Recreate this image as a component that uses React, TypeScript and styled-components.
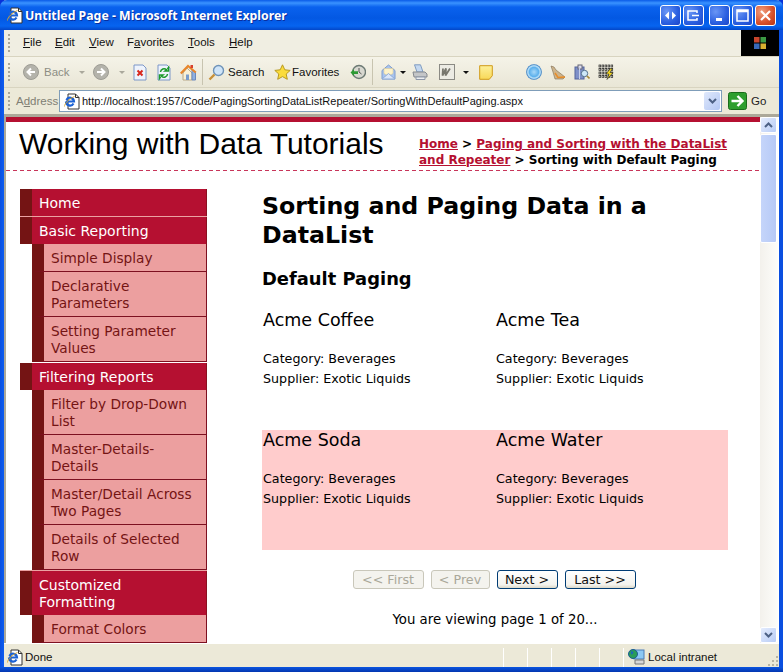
import React from "react";
import styled, { createGlobalStyle } from "styled-components";

const GlobalStyle = createGlobalStyle`
  html, body { margin: 0; padding: 0; background: #0831d9; overflow: hidden; }
  * { box-sizing: border-box; }
`;

const UI_FONT = `"Liberation Sans", Arial, sans-serif`;
const PAGE_FONT = `"DejaVu Sans", Verdana, sans-serif`;

const Window = styled.div`
  width: 783px;
  height: 672px;
  display: flex;
  flex-direction: column;
  overflow: hidden;
  border-radius: 7px 7px 0 0;
  background: linear-gradient(90deg, #0a4fe0 0, #0d5cf0 4px, #ece9d8 4px, #ece9d8 779px, #0a4fe0 779px);
  font-family: ${UI_FONT};
`;

const TitleBar = styled.div`
  height: 30px;
  flex: none;
  display: flex;
  align-items: center;
  padding: 0 7px 0 6px;
  background: linear-gradient(180deg, #0a5be8 0, #3a93ff 3px, #0a62ee 7px, #0358e3 18px, #0664f0 26px, #0346c8 30px);
`;

const TitleText = styled.span`
  margin-left: 2px;
  flex: 1;
  color: #fff;
  font-family: "Noto Sans", sans-serif;
  font-size: 12.3px;
  font-weight: 700;
  text-shadow: 1px 1px 0 #0a2f9e;
  white-space: nowrap;
`;

const CaptionButton = styled.div<{ $red?: boolean; $gap?: number }>`
  width: 21px;
  height: 21px;
  margin-left: ${(p) => p.$gap ?? 2}px;
  border: 1px solid #fff;
  border-radius: 3px;
  display: flex;
  align-items: center;
  justify-content: center;
  background: ${(p) =>
    p.$red
      ? "radial-gradient(circle at 30% 30%, #f0a080, #d8502a 60%, #b93412)"
      : "radial-gradient(circle at 30% 30%, #6a96f5, #2a5fe0 60%, #1c45c8)"};
`;

const Chrome = styled.div`
  flex: none;
  margin: 0 4px;
  background: #ece9d8;
`;

const MenuRow = styled.div`
  height: 27px;
  display: flex;
  align-items: center;
  padding-left: 4px;
  background: #f0eee2;
  border-bottom: 1px solid #d8d4c0;
`;

const Grip = styled.div<{ $gap?: number }>`
  width: 2px;
  height: 18px;
  flex: none;
  margin-right: ${(p) => p.$gap ?? 13}px;
  background: repeating-linear-gradient(180deg, #a8a698 0, #a8a698 2px, transparent 2px, transparent 4px);
`;

const MenuItem = styled.span<{ $w: number }>`
  width: ${(p) => p.$w}px;
  margin-bottom: 2px;
  font-size: 11.5px;
  color: #111;
  u { text-decoration: underline; }
`;

const Flag = styled.div`
  margin-left: auto;
  width: 38px;
  height: 26px;
  background: #000;
  display: flex;
  align-items: center;
  justify-content: center;
`;

const ToolRow = styled.div`
  height: 31px;
  display: flex;
  align-items: center;
  padding-left: 4px;
  border-bottom: 1px solid #d8d4c0;
  background: linear-gradient(180deg, #f5f3e8, #e9e6d6);
`;

const Slot = styled.div<{ $w: number }>`
  width: ${(p) => p.$w}px;
  flex: none;
  display: flex;
  align-items: center;
  font-size: 11.5px;
  color: #111;
`;

const Disabled = styled.span`
  color: #8d8d84;
  margin-left: 5px;
`;

const ToolLabel = styled.span<{ $gap: number }>`
  margin-left: ${(p) => p.$gap}px;
`;

const Caret = styled.div<{ $dim?: boolean; $gap?: number }>`
  width: 0;
  height: 0;
  margin-left: ${(p) => p.$gap ?? 0}px;
  border-left: 3px solid transparent;
  border-right: 3px solid transparent;
  border-top: 3px solid ${(p) => (p.$dim ? "#aaa89c" : "#111")};
`;

const Sep = styled.div`
  width: 1px;
  height: 26px;
  flex: none;
  background: #c8c4b0;
`;

const AddressRow = styled.div`
  height: 26px;
  display: flex;
  align-items: center;
  padding-left: 4px;
`;

const AddressLabel = styled.span`
  width: 43px;
  font-size: 11.5px;
  color: #7f7e74;
`;

const AddressBox = styled.div`
  width: 663px;
  height: 22px;
  display: flex;
  align-items: center;
  padding-left: 3px;
  background: #fff;
  border: 1px solid #7f9db9;
`;

const UrlText = styled.span`
  flex: 1;
  margin: 0 0 1px 2px;
  font-size: 11px;
  color: #111;
  white-space: nowrap;
`;

const DropButton = styled.div`
  width: 16px;
  height: 18px;
  margin-right: 1px;
  display: flex;
  align-items: center;
  justify-content: center;
  background: linear-gradient(135deg, #dfe8fb, #b4c8f4);
  border-radius: 2px;
`;

const GoWrap = styled.div`
  display: flex;
  align-items: center;
  margin-left: 6px;
  font-size: 11.5px;
  color: #222;
  span { margin-left: 4px; }
`;

const Viewport = styled.div`
  flex: none;
  height: 529px;
  margin: 0 4px;
  display: flex;
  border-top: 3px solid #aca899;
  border-left: 2px solid #aca899;
  background: #fff;
  overflow: hidden;
`;

const Page = styled.div`
  width: 754px;
  flex: none;
  overflow: hidden;
  font-family: ${PAGE_FONT};
`;

const TopStripe = styled.div`
  height: 5px;
  background: #b51031;
`;

const Header = styled.div`
  height: 49px;
  display: flex;
  background: repeating-linear-gradient(90deg, #c8355a 0, #c8355a 4px, transparent 4px, transparent 7px) left bottom / 100% 1px no-repeat;
`;

const SiteTitle = styled.div`
  width: 400px;
  padding: 4px 0 0 13px;
  font-family: "Liberation Sans", Arial, sans-serif;
  font-size: 30px;
  line-height: 36px;
  color: #000;
  white-space: nowrap;
`;

const Crumbs = styled.div`
  width: 326px;
  padding: 14px 0 0 13px;
  font-size: 12px;
  line-height: 16px;
  font-weight: 700;
  color: #000;
  white-space: nowrap;
  a { color: #b51031; text-decoration: underline; }
`;

const Body = styled.div`
  display: flex;
  padding-top: 18px;
`;

const Sidebar = styled.nav`
  width: 187px;
  margin-left: 14px;
  flex: none;
  font-size: 14px;
  line-height: 17px;
`;

const MainLink = styled.div<{ $gapTop?: number }>`
  margin-top: ${(p) => p.$gapTop ?? 0}px;
  background: #b51031;
  color: #fff;
  border-left: 12px solid #741414;
  border-right: 1px solid #8a1020;
  padding: 6px 4px 4px 7px;
`;

const SubLink = styled.div`
  margin-left: 12px;
  border-left: 12px solid #741414;
  border-right: 1px solid #7d1020;
  border-bottom: 1px solid #7d1020;
  background: #ec9f9f;
  color: #741414;
  font-size: 13.7px;
  padding: 6px 8px 4px 7px;
`;

const LightRule = styled.div`
  height: 1px;
  background: #eba2a2;
`;

const Main = styled.main`
  margin-left: 55px;
  padding-top: 3px;
  width: 466px;
  color: #000;
`;

const Heading = styled.h1`
  margin: 0 0 18px;
  font-size: 23.7px;
  line-height: 29px;
  font-weight: 700;
`;

const SubHeading = styled.h2`
  margin: 0 0 20px;
  font-size: 17.9px;
  line-height: 22px;
  font-weight: 700;
`;

const Row = styled.div<{ $pink?: boolean }>`
  height: 120px;
  display: grid;
  grid-template-columns: 233px 233px;
  background: ${(p) => (p.$pink ? "#ffcccc" : "transparent")};
`;

const Product = styled.div`
  padding-left: 1px;
`;

const ProductName = styled.div`
  height: 39px;
  font-size: 17.5px;
  line-height: 20px;
`;

const ProductLine = styled.div`
  font-size: 12.7px;
  line-height: 20px;
`;

const Pager = styled.div`
  display: flex;
  justify-content: center;
  gap: 7px;
  margin-top: 20px;
  padding-right: 2px;
`;

const PagerButton = styled.button<{ $w: number }>`
  width: ${(p) => p.$w}px;
  height: 19px;
  padding: 0;
  border-radius: 3px;
  font-family: ${PAGE_FONT};
  font-size: 12.7px;
  line-height: 15px;
  color: #111;
  border: 1px solid #003c74;
  background: linear-gradient(180deg, #fff, #f4f3ee 80%, #dcd8c8);
  &:disabled {
    color: #aaa89a;
    border-color: #c9c7ba;
    background: #f4f3ee;
  }
`;

const PageNote = styled.div`
  margin-top: 21px;
  text-align: center;
  font-size: 13.3px;
  line-height: 20px;
`;

const Scrollbar = styled.div`
  width: 18px;
  flex: none;
  display: flex;
  flex-direction: column;
  background: linear-gradient(90deg, #f3f1ec, #fdfdfa);
`;

const ScrollBtn = styled.div`
  width: 17px;
  height: 16px;
  flex: none;
  display: flex;
  align-items: center;
  justify-content: center;
  border: 1px solid #fff;
  border-radius: 2px;
  background: linear-gradient(135deg, #e4ecfd, #b8ccf6);
`;

const ScrollThumb = styled.div`
  width: 17px;
  height: 109px;
  margin-top: 1px;
  flex: none;
  border: 1px solid #fff;
  border-radius: 2px;
  background: linear-gradient(90deg, #c5d5fa, #b6c9f6);
`;

const ScrollTrack = styled.div`
  flex: 1;
`;

const StatusBar = styled.div`
  flex: none;
  height: 24px;
  margin: 0 4px;
  padding-top: 3px;
  display: flex;
  align-items: center;
  border-top: 1px solid #fff;
  background: #ece9d8;
  font-size: 11.5px;
  color: #111;
`;

const StatusMain = styled.div`
  width: 499px;
  flex: none;
  display: flex;
  align-items: center;
  padding-left: 2px;
  span { margin-left: 2px; }
`;

const StatusCell = styled.div`
  width: 24px;
  height: 19px;
  flex: none;
  border-left: 1px solid #fff;
`;

const ZoneCell = styled.div`
  flex: 1;
  height: 19px;
  display: flex;
  align-items: center;
  padding-left: 4px;
  border-left: 1px solid #fff;
  span { margin-left: 3px; }
  svg:last-child { margin-left: auto; align-self: flex-end; }
`;

const BottomEdge = styled.div`
  flex: 1;
  background: linear-gradient(180deg, #0a55e0, #0336b0);
`;

const IeDoc = () => (
  <svg width="17" height="17" viewBox="0 0 17 17">
    <path d="M5 1h7.500L16 4.500V16H5z" fill="#fff" stroke="#333" />
    <path d="M12.500 1v3.500H16" fill="none" stroke="#333" />
    <path d="M3 8.500h8a4 4 0 0 0-7.600-1.500M3 8.500a4 4 0 0 0 7.500 2" fill="none" stroke="#1c62d4" strokeWidth="2.200" />
    <path d="M1.500 13.500C1 11 7 5 11.500 3.500" fill="none" stroke="#e0a828" strokeWidth=".9" />
  </svg>
);

const NavCircle = ({ back }: { back?: boolean }) => (
  <svg width="16" height="16" viewBox="0 0 16 16">
    <circle cx="8" cy="8" r="7.500" fill="#b4b3ab" stroke="#9d9c94" />
    <path d={back ? "M12 8H5M8 4.500 4.500 8 8 11.500" : "M4 8h7M8 4.500 11.500 8 8 11.500"} stroke="#fff" strokeWidth="2" fill="none" />
  </svg>
);

const StopIcon = () => (
  <svg width="14" height="17" viewBox="0 0 14 17">
    <path d="M1 1h9l3 3v12H1z" fill="#eef3fc" stroke="#7d97c8" />
    <path d="M4.500 6.500l5 5M9.500 6.500l-5 5" stroke="#d8261c" strokeWidth="2" />
  </svg>
);

const RefreshIcon = () => (
  <svg width="14" height="17" viewBox="0 0 14 17">
    <path d="M1 1h9l3 3v12H1z" fill="#eef3fc" stroke="#7d97c8" />
    <path d="M3.500 8a3.500 3.500 0 0 1 6-2.200L8 7h3.500V3.500L10.400 5M10.500 10a3.500 3.500 0 0 1-6 2.200L6 11H2.500v3.500l1.100-1.500" fill="none" stroke="#1c9a2c" strokeWidth="1.500" />
  </svg>
);

const HomeIcon = () => (
  <svg width="17" height="17" viewBox="0 0 17 17">
    <path d="M3 9v7h9V9L7 4z" fill="#fbf0d4" stroke="#b8a888" />
    <path d="M12 16h3.500V8.500L12 5.500z" fill="#8fb0e0" stroke="#6a88bc" />
    <path d="M.8 9.500 8 2l7.800 6.500" fill="none" stroke="#e8862c" strokeWidth="2.200" />
    <rect x="10.500" y="1" width="2.500" height="3" fill="#d8402c" />
    <rect x="6" y="10.500" width="3" height="5.500" fill="#7a9ccc" />
  </svg>
);

const SearchIcon = () => (
  <svg width="17" height="17" viewBox="0 0 17 17">
    <circle cx="10.500" cy="6.500" r="5" fill="#cfe4f8" stroke="#6f93b8" strokeWidth="1.400" />
    <path d="M6.500 10.500 1.500 15.500" stroke="#c89038" strokeWidth="2.400" />
  </svg>
);

const StarIcon = () => (
  <svg width="17" height="16" viewBox="0 0 17 16">
    <path d="M8.500.8 10.800 5.800l5.400.6-4 3.600 1.100 5.300-4.800-2.700-4.800 2.700L4.800 10l-4-3.600 5.400-.6z" fill="#fbdc3c" stroke="#b89a20" />
  </svg>
);

const HistoryIcon = () => (
  <svg width="16" height="16" viewBox="0 0 16 16">
    <circle cx="9" cy="8" r="6.500" fill="#d8d8d0" stroke="#6d7a74" strokeWidth="1.400" />
    <path d="M9 4v4l2.500 2" stroke="#555" fill="none" />
    <path d="M.5 8.500 4 5v2.200h4V10H4v2z" fill="#2d9a34" />
  </svg>
);

const MailIcon = () => (
  <svg width="15" height="16" viewBox="0 0 15 16">
    <path d="M1 6.500 7.500 1 14 6.500v8.500H1z" fill="#a9c4ee" stroke="#7f9ccc" strokeLinejoin="round" />
    <path d="M3 4.500h9v5l-4.500 2.500L3 9.500z" fill="#fdf2c8" stroke="#d8c48c" strokeWidth=".5" />
    <path d="M1 15 7.500 9.500 14 15z" fill="#dbe6f8" stroke="#8facd8" strokeLinejoin="round" />
  </svg>
);

const PrintIcon = () => (
  <svg width="16" height="16" viewBox="0 0 16 16">
    <path d="M2.500.8h6L11 8H5z" fill="#c4d8f0" stroke="#7f9cc0" />
    <path d="M1 8h12l2 2v3H2z" fill="#c4c6c8" stroke="#85898e" />
    <path d="M4 13h9v2.500H4z" fill="#eceef0" stroke="#8e98a8" />
  </svg>
);

const WordIcon = () => (
  <svg width="16" height="16" viewBox="0 0 16 16">
    <rect x=".5" y=".5" width="15" height="15" fill="#ecebe4" stroke="#8b8a84" />
    <path d="M4 4.500l-.5 7 3.500-7-.5 7 4.500-7" fill="none" stroke="#77766e" strokeWidth="1.800" />
  </svg>
);

const NoteIcon = () => (
  <svg width="14" height="15" viewBox="0 0 14 15">
    <defs>
      <linearGradient id="noteFill" x1="0" y1="0" x2="0" y2="1">
        <stop offset="0" stopColor="#fdf09a" />
        <stop offset="1" stopColor="#f8d858" />
      </linearGradient>
    </defs>
    <path d="M.7.7h12.600v10l-3 3.600H.7z" fill="url(#noteFill)" stroke="#d09a18" />
  </svg>
);

const GlobeIcon = () => (
  <svg width="16" height="16" viewBox="0 0 16 16">
    <defs>
      <radialGradient id="globeFill" cx="0.5" cy="0.5" r="0.5">
        <stop offset="0" stopColor="#a8d8f8" />
        <stop offset="0.6" stopColor="#5cb0ec" />
        <stop offset="0.8" stopColor="#bfe4fa" />
        <stop offset="1" stopColor="#1868b8" />
      </radialGradient>
    </defs>
    <circle cx="8" cy="8" r="7.800" fill="url(#globeFill)" />
  </svg>
);

const CatIcon = () => (
  <svg width="16" height="15" viewBox="0 0 16 15">
    <path d="M1 1l3 1 2 3 9 7-2 2H5L3 7z" fill="#cdb48c" stroke="#7e6c50" strokeWidth=".6" />
    <path d="M5 8l3 4.500 7-.5" fill="none" stroke="#e88c28" strokeWidth="1.500" />
  </svg>
);

const DocSearchIcon = () => (
  <svg width="16" height="16" viewBox="0 0 16 16">
    <rect x="1" y="3" width="9" height="12" fill="#7f90c8" stroke="#55649c" />
    <rect x="4" y="1" width="4" height="4" fill="#dde" stroke="#667" />
    <path d="M5.500 3v12" stroke="#c8d0e8" />
    <circle cx="10.500" cy="9.500" r="3.200" fill="#cfe8f8" stroke="#55708c" />
    <path d="M13 12l2.500 2.500" stroke="#a88838" strokeWidth="1.600" />
  </svg>
);

const DotsIcon = () => (
  <svg width="16" height="16" viewBox="0 0 16 16">
    {[1, 4, 7, 10, 13].map((x) =>
      [1, 4.500, 8, 11.500].map((y) => (
        <rect key={`${x}-${y}`} x={x} y={y} width="1.700" height="2" fill="none" stroke="#222" strokeWidth=".7" />
      ))
    )}
    <path d="M12.500 4.500 8 10h3l-2 5.500 6-7h-3l2.500-4z" fill="#f8dc20" stroke="#222" strokeWidth=".6" />
  </svg>
);

const GoIcon = () => (
  <svg width="19" height="18" viewBox="0 0 19 18">
    <rect x=".5" y=".5" width="18" height="17" rx="2" fill="#2e9e2e" stroke="#1a6c1a" />
    <path d="M3.500 9h11M9.500 4l5 5-5 5" fill="none" stroke="#fff" strokeWidth="2.400" />
  </svg>
);

const Chevron = ({ up }: { up?: boolean }) => (
  <svg width="9" height="6" viewBox="0 0 9 6">
    <path d={up ? "M1 5 4.500 1.500 8 5" : "M1 1l3.500 3.500L8 1"} fill="none" stroke="#4d6185" strokeWidth="2" />
  </svg>
);

const NetIcon = () => (
  <svg width="17" height="18" viewBox="0 0 17 18">
    <rect x="6" y="2" width="10" height="9" fill="#8cc8f4" stroke="#4a7cb8" />
    <circle cx="5" cy="6" r="4.500" fill="#2a9c58" stroke="#1c5c94" />
    <path d="M3 3.500c2-1 3 .5 2 2S2.500 7 3 3.500z" fill="#1c68b8" />
    <path d="M7 12h9v4H7z" fill="#d8d8d8" stroke="#777" />
  </svg>
);

const ResizeGrip = () => (
  <svg width="12" height="12" viewBox="0 0 12 12">
    {[[9, 1], [5, 5], [9, 5], [1, 9], [5, 9], [9, 9]].map(([x, y]) => (
      <rect key={`${x}-${y}`} x={x} y={y} width="2" height="2" fill="#b8b5a4" />
    ))}
  </svg>
);

const products = [
  ["Acme Coffee", "Acme Tea"],
  ["Acme Soda", "Acme Water"],
];

const App = () => (
  <>
    <GlobalStyle />
    <Window>
      <TitleBar>
        <IeDoc />
        <TitleText>Untitled Page - Microsoft Internet Explorer</TitleText>
        <CaptionButton>
          <svg width="13" height="11" viewBox="0 0 13 11"><path d="M5 1.500v8L1 5.500zM8 1.500v8l4-4z" fill="#fff" /></svg>
        </CaptionButton>
        <CaptionButton>
          <svg width="13" height="11" viewBox="0 0 13 11"><path d="M10 3V1H1v9h9V8M5 5.500h7" fill="none" stroke="#fff" strokeWidth="1.500" /></svg>
        </CaptionButton>
        <CaptionButton $gap={5}>
          <svg width="11" height="11" viewBox="0 0 11 11"><rect x="2" y="8" width="6" height="3" fill="#fff" /></svg>
        </CaptionButton>
        <CaptionButton>
          <svg width="13" height="13" viewBox="0 0 13 13"><path d="M1 1h11v11H1zM1 2.500h11" fill="none" stroke="#fff" strokeWidth="1.500" /></svg>
        </CaptionButton>
        <CaptionButton $red>
          <svg width="13" height="13" viewBox="0 0 13 13"><path d="M2 2l9 9M11 2l-9 9" stroke="#fff" strokeWidth="2.200" /></svg>
        </CaptionButton>
      </TitleBar>

      <Chrome>
        <MenuRow>
          <Grip />
          <MenuItem $w={32}><u>F</u>ile</MenuItem>
          <MenuItem $w={34}><u>E</u>dit</MenuItem>
          <MenuItem $w={38}><u>V</u>iew</MenuItem>
          <MenuItem $w={61}>F<u>a</u>vorites</MenuItem>
          <MenuItem $w={41}><u>T</u>ools</MenuItem>
          <MenuItem $w={40}><u>H</u>elp</MenuItem>
          <Flag>
            <svg width="14" height="14" viewBox="0 0 14 14">
              <rect x="1" y="1" width="5.500" height="5.500" fill="#c8452c" />
              <rect x="7.500" y="1" width="5.500" height="5.500" fill="#3c9a44" />
              <rect x="1" y="7.500" width="5.500" height="5.500" fill="#3868b8" />
              <rect x="7.500" y="7.500" width="5.500" height="5.500" fill="#d8b030" />
            </svg>
          </Flag>
        </MenuRow>

        <ToolRow>
          <Grip />
          <Slot $w={56}><NavCircle back /><Disabled>Back</Disabled></Slot>
          <Slot $w={14}><Caret $dim /></Slot>
          <Slot $w={26}><NavCircle /></Slot>
          <Slot $w={14}><Caret $dim /></Slot>
          <Slot $w={24}><StopIcon /></Slot>
          <Slot $w={23}><RefreshIcon /></Slot>
          <Slot $w={22}><HomeIcon /></Slot>
          <Sep />
          <Slot $w={5} />
          <Slot $w={66}><SearchIcon /><ToolLabel $gap={3}>Search</ToolLabel></Slot>
          <Slot $w={76}><StarIcon /><ToolLabel $gap={1}>Favorites</ToolLabel></Slot>
          <Slot $w={22}><HistoryIcon /></Slot>
          <Sep />
          <Slot $w={8} />
          <Slot $w={31}><MailIcon /><Caret $gap={4} /></Slot>
          <Slot $w={27}><PrintIcon /></Slot>
          <Slot $w={24}><WordIcon /></Slot>
          <Slot $w={16}><Caret /></Slot>
          <Slot $w={47}><NoteIcon /></Slot>
          <Slot $w={24}><GlobeIcon /></Slot>
          <Slot $w={24}><CatIcon /></Slot>
          <Slot $w={24}><DocSearchIcon /></Slot>
          <Slot $w={24}><DotsIcon /></Slot>
        </ToolRow>

        <AddressRow>
          <Grip $gap={6} />
          <AddressLabel>A<u>d</u>dress</AddressLabel>
          <AddressBox>
            <IeDoc />
            <UrlText>http://localhost:1957/Code/PagingSortingDataListRepeater/SortingWithDefaultPaging.aspx</UrlText>
            <DropButton><Chevron /></DropButton>
          </AddressBox>
          <GoWrap><GoIcon /><span>Go</span></GoWrap>
        </AddressRow>
      </Chrome>

      <Viewport>
        <Page>
          <TopStripe />
          <Header>
            <SiteTitle>Working with Data Tutorials</SiteTitle>
            <Crumbs>
              <a>Home</a> &gt; <a>Paging and Sorting with the DataList</a>
              <br />
              <a>and Repeater</a> &gt; Sorting with Default Paging
            </Crumbs>
          </Header>
          <Body>
            <Sidebar>
              <MainLink>Home</MainLink>
              <LightRule />
              <MainLink>Basic Reporting</MainLink>
              <SubLink>Simple Display</SubLink>
              <SubLink>Declarative Parameters</SubLink>
              <SubLink>Setting Parameter Values</SubLink>
              <MainLink $gapTop={1}>Filtering Reports</MainLink>
              <SubLink>Filter by Drop-Down List</SubLink>
              <SubLink>Master-Details-Details</SubLink>
              <SubLink>Master/Detail Across Two Pages</SubLink>
              <SubLink>Details of Selected Row</SubLink>
              <LightRule />
              <MainLink>Customized Formatting</MainLink>
              <SubLink>Format Colors</SubLink>
            </Sidebar>
            <Main>
              <Heading>Sorting and Paging Data in a DataList</Heading>
              <SubHeading>Default Paging</SubHeading>
              {products.map((row, i) => (
                <Row key={row[0]} $pink={i === 1}>
                  {row.map((name) => (
                    <Product key={name}>
                      <ProductName>{name}</ProductName>
                      <ProductLine>Category: Beverages</ProductLine>
                      <ProductLine>Supplier: Exotic Liquids</ProductLine>
                    </Product>
                  ))}
                </Row>
              ))}
              <Pager>
                <PagerButton $w={71} disabled>&lt;&lt; First</PagerButton>
                <PagerButton $w={59} disabled>&lt; Prev</PagerButton>
                <PagerButton $w={61}>Next &gt;</PagerButton>
                <PagerButton $w={71}>Last &gt;&gt;</PagerButton>
              </Pager>
              <PageNote>You are viewing page 1 of 20...</PageNote>
            </Main>
          </Body>
        </Page>
        <Scrollbar>
          <ScrollBtn><Chevron up /></ScrollBtn>
          <ScrollThumb />
          <ScrollTrack />
          <ScrollBtn><Chevron /></ScrollBtn>
        </Scrollbar>
      </Viewport>

      <StatusBar>
        <StatusMain><IeDoc /><span>Done</span></StatusMain>
        <StatusCell />
        <StatusCell />
        <StatusCell />
        <StatusCell />
        <StatusCell />
        <ZoneCell><NetIcon /><span>Local intranet</span><ResizeGrip /></ZoneCell>
      </StatusBar>
      <BottomEdge />
    </Window>
  </>
);

export default App;
